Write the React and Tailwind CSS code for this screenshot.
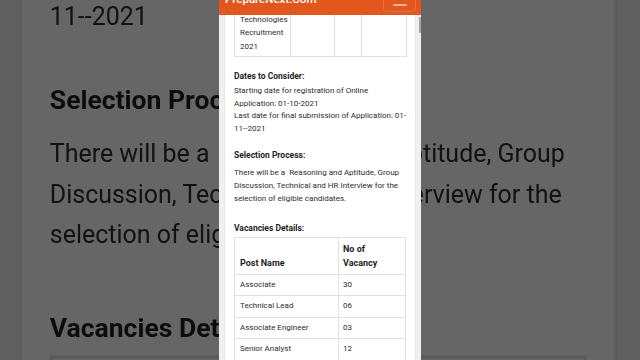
const FONT = "font-[Roboto,'Noto_Sans',sans-serif]";

const vacancies = [
  { post: "Associate", count: "30" },
  { post: "Technical Lead", count: "06" },
  { post: "Associate Engineer", count: "03" },
  { post: "Senior Analyst", count: "12" },
  { post: "Business Analyst", count: "05" },
];

// the article body, used twice: in the phone and as the dimmed zoomed backdrop
function PageContent() {
  return (
    <div className="w-[202px] bg-[#f0f0f0] px-[5px]">
      <div className="bg-white border-x border-[#e6e6e6] px-[9px] pb-10 text-[8px] text-[#2c2c2c]">
        <table className="-mt-[7px] w-[172px] table-fixed border-collapse">
          <tbody>
            <tr>
              <td className="w-[56px] border border-[#e2e2e2] px-[5px] pt-[5px] pb-[3px] align-top leading-[13.5px]">
                Quadrant<br />Technologies<br />Recruitment<br />2021
              </td>
              <td className="w-[44px] border border-[#e2e2e2]"></td>
              <td className="w-[27px] border border-[#e2e2e2]"></td>
              <td className="w-[45px] border border-[#e2e2e2]"></td>
            </tr>
          </tbody>
        </table>

        <div className="mt-[13px] text-[8.5px] font-bold leading-[12px] text-[#1e1e1e]">Dates to Consider:</div>
        <div className="mt-[3px] leading-[12.5px] whitespace-nowrap">
          <div>Starting date for registration of Online</div>
          <div>Application: 01-10-2021</div>
          <div>Last date for final submission of Application: 01-</div>
          <div>11--2021</div>
        </div>

        <div className="mt-[13.5px] text-[8.5px] font-bold leading-[12px] text-[#1e1e1e]">Selection Process:</div>
        <div className="mt-[5px] leading-[13px] whitespace-nowrap">
          <div>There will be a{"\u00a0"} Reasoning and Aptitude, Group</div>
          <div>Discussion, Technical and HR Interview for the</div>
          <div>selection of eligible candidates.</div>
        </div>

        <div className="mt-[17px] text-[8.5px] font-bold leading-[12px] text-[#1e1e1e]">Vacancies Details:</div>
        <table className="mt-[3px] w-[172px] table-fixed border-collapse">
          <thead>
            <tr>
              <th className="w-[104px] border border-[#e2e2e2] px-[5px] pt-[4px] pb-[4px] text-left align-bottom text-[9px] font-bold leading-[14px] text-[#1e1e1e]">
                Post Name
              </th>
              <th className="border border-[#e2e2e2] px-[4px] pt-[4px] pb-[4px] text-left align-bottom text-[9px] font-bold leading-[14px] text-[#1e1e1e]">
                No of<br />Vacancy
              </th>
            </tr>
          </thead>
          <tbody>
            {vacancies.map(v => (
              <tr key={v.post}>
                <td className="h-[21.5px] border border-[#e2e2e2] px-[5px] py-0 leading-[12px]">{v.post}</td>
                <td className="h-[21.5px] border border-[#e2e2e2] px-[4px] py-0 leading-[12px]">{v.count}</td>
              </tr>
            ))}
          </tbody>
        </table>
      </div>
    </div>
  );
}

export default function App() {
  return (
    <div className={`relative w-[640px] h-[360px] overflow-hidden flex justify-center ${FONT}`}>
      {/* zoomed, darkened copy of the page behind the phone */}
      <div className="absolute inset-0 overflow-hidden bg-[#f0f0f0] brightness-[0.4]">
        <div className="absolute left-[3.2px] top-[-384px] origin-top-left scale-[3.12]">
          <PageContent />
        </div>
      </div>

      {/* phone screen */}
      <div className="relative z-10 w-[202px] h-[360px] overflow-hidden bg-[#f0f0f0]">
        <PageContent />

        <div className="absolute top-0 left-0 right-0 h-[15px] bg-[#e1571d] flex items-start overflow-hidden">
          <span className="ml-[6px] -mt-[8px] text-[11.5px] font-medium leading-[14px] text-white">PrepareNext.Com</span>
          <div className="ml-auto mr-[5px] -mt-[16px] h-[28px] w-[33px] rounded-[3px] border border-[#e66e40] flex flex-col items-center justify-end gap-[4px] pb-[5px]">
            <span className="block h-[2px] w-[14px] rounded bg-[#f7b294]"></span>
            <span className="block h-[2px] w-[14px] rounded bg-[#f7b294]"></span>
            <span className="block h-[2px] w-[14px] rounded bg-[#f7b294]"></span>
          </div>
        </div>

        <div className="absolute right-0 top-[17px] h-[16px] w-[2px] rounded bg-[#a4a4a4]"></div>
      </div>
    </div>
  );
}
